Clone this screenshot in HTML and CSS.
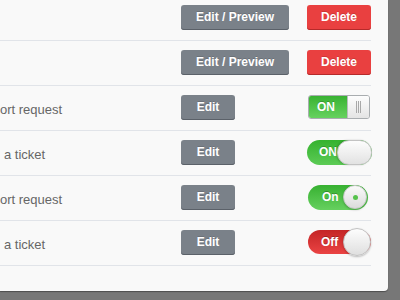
FILE: index.html
```html
<!DOCTYPE html>
<html>
<head>
<meta charset="utf-8">
<link rel="stylesheet" href="styles.css">
</head>
<body>
<div class="panel">
  <div class="list">
    <div class="row">
      <div class="label"></div>
      <div class="edit-cell"><button class="btn btn-gray btn-wide">Edit / Preview</button></div>
      <div class="action-cell"><button class="btn btn-red">Delete</button></div>
    </div>
    <div class="row">
      <div class="label"></div>
      <div class="edit-cell"><button class="btn btn-gray btn-wide">Edit / Preview</button></div>
      <div class="action-cell"><button class="btn btn-red">Delete</button></div>
    </div>
    <div class="row">
      <div class="label">ort request</div>
      <div class="edit-cell"><button class="btn btn-gray">Edit</button></div>
      <div class="action-cell">
        <div class="sw-classic">
          <span class="sw-classic-on">ON</span>
          <span class="sw-classic-handle"><i></i><i></i><i></i></span>
        </div>
      </div>
    </div>
    <div class="row">
      <div class="label label-indent">a ticket</div>
      <div class="edit-cell"><button class="btn btn-gray">Edit</button></div>
      <div class="action-cell">
        <div class="sw-pill">
          <span class="sw-pill-text">ON</span>
          <span class="sw-pill-knob"></span>
        </div>
      </div>
    </div>
    <div class="row">
      <div class="label">ort request</div>
      <div class="edit-cell"><button class="btn btn-gray">Edit</button></div>
      <div class="action-cell">
        <div class="sw-round">
          <span class="sw-round-text">On</span>
          <span class="sw-round-knob"><i></i></span>
        </div>
      </div>
    </div>
    <div class="row">
      <div class="label label-indent">a ticket</div>
      <div class="edit-cell"><button class="btn btn-gray">Edit</button></div>
      <div class="action-cell">
        <div class="sw-off">
          <span class="sw-off-text">Off</span>
          <span class="sw-off-knob"></span>
        </div>
      </div>
    </div>
  </div>
</div>
</body>
</html>
```

FILE: styles.css
```css
html, body {
  margin: 0;
  padding: 0;
  background: #777777;
  width: 400px;
  height: 300px;
  overflow: hidden;
  font-family: "Liberation Sans", Arial, sans-serif;
}

.panel {
  width: 388px;
  height: 291px;
  background: #f9f9f9;
  border-radius: 0 0 4px 0;
  box-shadow: 0 1px 1px rgba(0, 0, 0, 0.35);
  overflow: hidden;
}

.list {
  margin-top: -4px;
  width: 371px;
}

.row {
  display: flex;
  align-items: center;
  height: 45px;
  box-sizing: border-box;
  padding-bottom: 2px;
  border-bottom: 1px solid #e1e4e9;
}

.label {
  flex: 1;
  font-size: 13px;
  color: #666666;
  white-space: nowrap;
  padding-top: 4px;
}

.label-indent {
  padding-left: 4px;
}

.edit-cell {
  width: 126px;
  display: flex;
}

.action-cell {
  width: 64px;
  display: flex;
  justify-content: flex-end;
}

.btn {
  font-family: "Liberation Sans", Arial, sans-serif;
  font-size: 12px;
  font-weight: bold;
  color: #ffffff;
  height: 25px;
  padding: 0;
  border: 0;
  border-radius: 3px;
  text-shadow: 0 -1px 0 rgba(0, 0, 0, 0.15);
  line-height: 24px;
}

.btn-gray {
  width: 54px;
  background: #7a8189;
  box-shadow: inset 0 -1px 0 #5b6169;
}

.btn-wide {
  width: 108px;
}

.btn-red {
  width: 64px;
  background: #e94040;
  box-shadow: inset 0 -1px 0 #b52a2a;
}

/* classic switch */
.sw-classic {
  width: 60px;
  height: 22px;
  margin-right: 1px;
  border: 1px solid #a9adb0;
  border-radius: 3px;
  display: flex;
  overflow: hidden;
}

.sw-classic-on {
  width: 38px;
  background: linear-gradient(#39b232, #66d25f);
  color: #ffffff;
  font-size: 12px;
  font-weight: bold;
  line-height: 22px;
  padding-left: 8px;
  box-sizing: border-box;
  text-shadow: 0 -1px 0 rgba(0, 0, 0, 0.2);
}

.sw-classic-handle {
  flex: 1;
  background: linear-gradient(#fdfdfd, #e4e4e4);
  border-left: 1px solid #b8bbbe;
  display: flex;
  justify-content: center;
  align-items: center;
  gap: 1px;
}

.sw-classic-handle i {
  display: block;
  width: 1px;
  height: 12px;
  background: #a8a8a8;
}

/* pill switch with wide knob */
.sw-pill {
  width: 70px;
  height: 25px;
  margin-right: -1px;
  border-radius: 13px;
  background: linear-gradient(#35b22f, #5ccb55);
  display: flex;
  align-items: center;
}

.sw-pill-text {
  color: #ffffff;
  font-size: 12px;
  font-weight: bold;
  padding-left: 12px;
  text-shadow: 0 -1px 0 rgba(0, 0, 0, 0.2);
}

.sw-pill-knob {
  margin-left: auto;
  width: 33px;
  height: 23px;
  border-radius: 12px;
  border: 1px solid #c3c3c3;
  background: linear-gradient(#fdfdfd, #e2e2e2);
  box-shadow: -1px 0 2px rgba(0, 0, 0, 0.2);
}

/* round switch with dot */
.sw-round {
  width: 60px;
  height: 25px;
  margin-right: 3px;
  border-radius: 13px;
  background: linear-gradient(#37b131, #66d05f);
  display: flex;
  align-items: center;
}

.sw-round-text {
  color: #ffffff;
  font-size: 12px;
  font-weight: bold;
  padding-left: 14px;
  text-shadow: 0 -1px 0 rgba(0, 0, 0, 0.25);
}

.sw-round-knob {
  margin-left: auto;
  margin-right: 1px;
  width: 22px;
  height: 22px;
  border-radius: 50%;
  border: 1px solid #c8c8c8;
  background: linear-gradient(#fafafa, #dcdcdc);
  box-shadow: 0 1px 2px rgba(0, 0, 0, 0.25);
  display: flex;
  align-items: center;
  justify-content: center;
}

.sw-round-knob i {
  display: block;
  width: 5px;
  height: 5px;
  border-radius: 50%;
  background: #55c24b;
}

/* off switch */
.sw-off {
  width: 63px;
  height: 24px;
  border-radius: 12px;
  background: linear-gradient(#c42526, #ea4343);
  display: flex;
  align-items: center;
}

.sw-off-text {
  color: #ffffff;
  font-size: 12px;
  font-weight: bold;
  padding-left: 13px;
  text-shadow: 0 -1px 0 rgba(0, 0, 0, 0.25);
}

.sw-off-knob {
  margin-left: auto;
  margin-top: -2px;
  margin-bottom: -2px;
  width: 26px;
  height: 26px;
  border-radius: 50%;
  border: 1px solid #c2c2c2;
  background: linear-gradient(#fdfdfd, #dfdfdf);
  box-shadow: 0 1px 2px rgba(0, 0, 0, 0.25);
}
```
